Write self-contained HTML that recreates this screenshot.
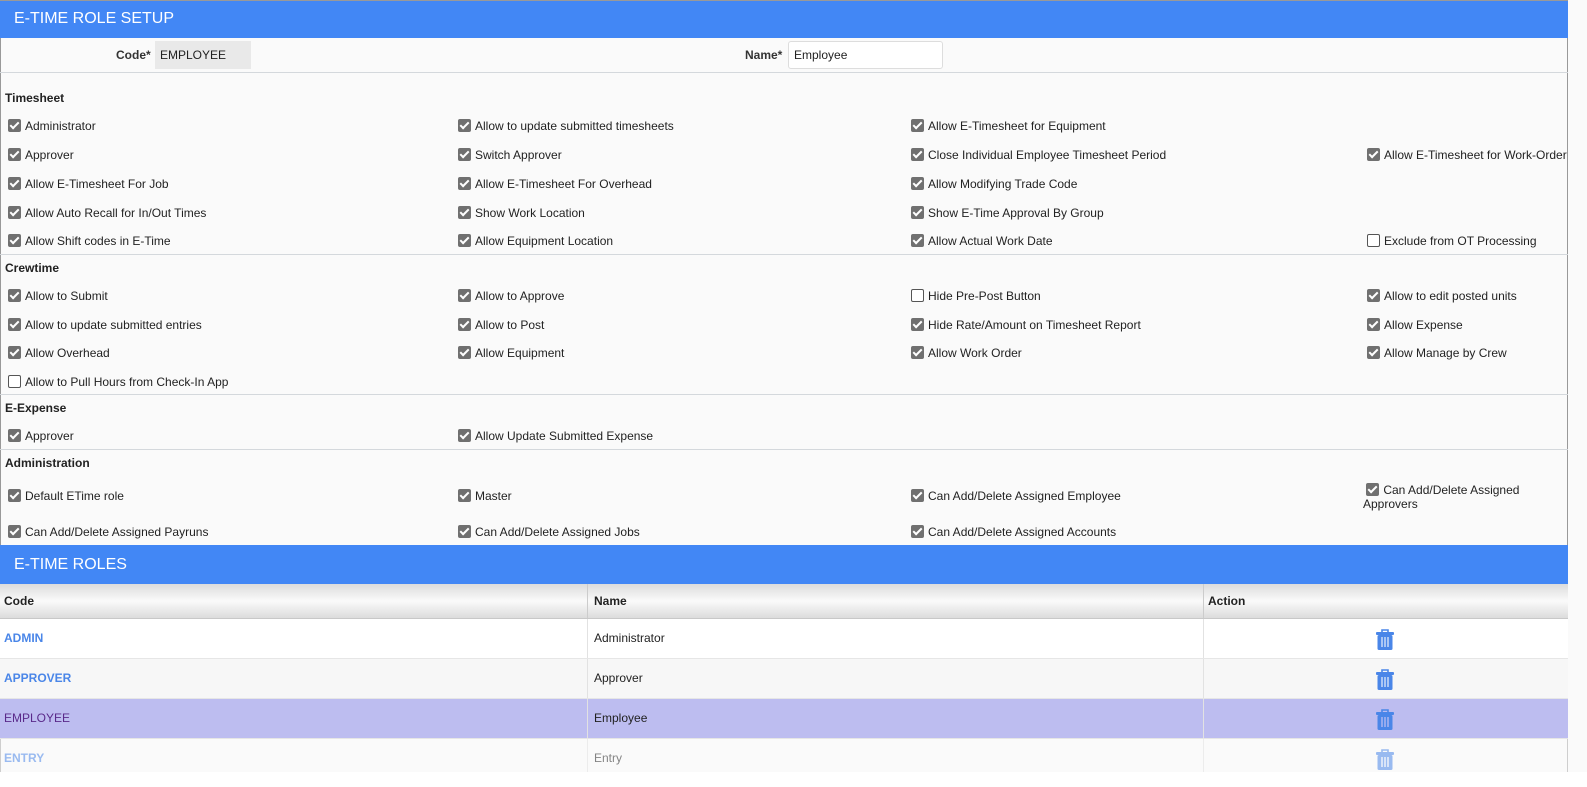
<!DOCTYPE html>
<html><head><style>
*{box-sizing:border-box;margin:0;padding:0}
body{width:1587px;height:787px;background:#fafafa;font-family:"Liberation Sans",Arial,sans-serif;font-size:12px;color:#222;position:relative;overflow:hidden}
.a{position:absolute;white-space:nowrap}
.bar{position:absolute;left:0;width:1568px;background:#4287f5;color:#fff;font-size:16px;padding-left:14px}
.cb{display:inline-block;width:13px;height:13px;border-radius:2px;background:#707070;vertical-align:-2px;margin-right:4px;position:relative}
.cb:after{content:"";position:absolute;left:4px;top:1px;width:3px;height:7px;border:solid #fff;border-width:0 2px 2px 0;transform:rotate(45deg)}
.un{background:#fff;border:1px solid #555}
.un:after{display:none}
.h{font-weight:bold}
.ln{position:absolute;left:0;width:1568px;height:1px;background:#d4d8dc}
.tbl{position:absolute;left:0;top:584px;width:1568px}
.tr{position:absolute;left:0;width:1568px;height:40px;border-bottom:1px solid #e6e6e6}
.tr div{position:absolute;top:0;height:100%;line-height:39px;padding-left:4px}
.c1{left:0;width:588px;border-right:1px solid #e2e2e2}
.c2{left:588px;width:616px;border-right:1px solid #e2e2e2;padding-left:6px!important}
.c3{left:1204px;width:364px}
.lk{color:#4a86e8;font-weight:bold}
.tr svg{position:absolute;left:172px;top:10px}
</style></head><body>
<div style="position:absolute;left:0;top:0;width:1568px;height:787px;border-left:1px solid #999;border-right:1px solid #999"></div>
<div class="bar" style="top:0;height:38px;line-height:36px;border-top:1px solid #999">E-TIME ROLE SETUP</div>
<div class="a h" style="left:116px;top:48px;font-weight:bold;color:#333">Code*</div>
<div class="a" style="left:155px;top:41px;width:96px;height:28px;background:#e9e9e9;line-height:28px;padding-left:5px">EMPLOYEE</div>
<div class="a" style="left:745px;top:48px;font-weight:bold;color:#333">Name*</div>
<div class="a" style="left:788px;top:41px;width:155px;height:28px;background:#fff;border:1px solid #ddd;border-radius:3px;line-height:26px;padding-left:5px">Employee</div>
<div class="ln" style="top:72px"></div>

<div class="a h" style="left:5px;top:91px">Timesheet</div>
<div class="a" style="left:8px;top:119px"><span class="cb"></span>Administrator</div>
<div class="a" style="left:458px;top:119px"><span class="cb"></span>Allow to update submitted timesheets</div>
<div class="a" style="left:911px;top:119px"><span class="cb"></span>Allow E-Timesheet for Equipment</div>
<div class="a" style="left:8px;top:148px"><span class="cb"></span>Approver</div>
<div class="a" style="left:458px;top:148px"><span class="cb"></span>Switch Approver</div>
<div class="a" style="left:911px;top:148px"><span class="cb"></span>Close Individual Employee Timesheet Period</div>
<div class="a" style="left:1367px;top:148px"><span class="cb"></span>Allow E-Timesheet for Work-Order</div>
<div class="a" style="left:8px;top:177px"><span class="cb"></span>Allow E-Timesheet For Job</div>
<div class="a" style="left:458px;top:177px"><span class="cb"></span>Allow E-Timesheet For Overhead</div>
<div class="a" style="left:911px;top:177px"><span class="cb"></span>Allow Modifying Trade Code</div>
<div class="a" style="left:8px;top:206px"><span class="cb"></span>Allow Auto Recall for In/Out Times</div>
<div class="a" style="left:458px;top:206px"><span class="cb"></span>Show Work Location</div>
<div class="a" style="left:911px;top:206px"><span class="cb"></span>Show E-Time Approval By Group</div>
<div class="a" style="left:8px;top:234px"><span class="cb"></span>Allow Shift codes in E-Time</div>
<div class="a" style="left:458px;top:234px"><span class="cb"></span>Allow Equipment Location</div>
<div class="a" style="left:911px;top:234px"><span class="cb"></span>Allow Actual Work Date</div>
<div class="a" style="left:1367px;top:234px"><span class="cb un"></span>Exclude from OT Processing</div>
<div class="ln" style="top:254px"></div>

<div class="a h" style="left:5px;top:261px">Crewtime</div>
<div class="a" style="left:8px;top:289px"><span class="cb"></span>Allow to Submit</div>
<div class="a" style="left:458px;top:289px"><span class="cb"></span>Allow to Approve</div>
<div class="a" style="left:911px;top:289px"><span class="cb un"></span>Hide Pre-Post Button</div>
<div class="a" style="left:1367px;top:289px"><span class="cb"></span>Allow to edit posted units</div>
<div class="a" style="left:8px;top:318px"><span class="cb"></span>Allow to update submitted entries</div>
<div class="a" style="left:458px;top:318px"><span class="cb"></span>Allow to Post</div>
<div class="a" style="left:911px;top:318px"><span class="cb"></span>Hide Rate/Amount on Timesheet Report</div>
<div class="a" style="left:1367px;top:318px"><span class="cb"></span>Allow Expense</div>
<div class="a" style="left:8px;top:346px"><span class="cb"></span>Allow Overhead</div>
<div class="a" style="left:458px;top:346px"><span class="cb"></span>Allow Equipment</div>
<div class="a" style="left:911px;top:346px"><span class="cb"></span>Allow Work Order</div>
<div class="a" style="left:1367px;top:346px"><span class="cb"></span>Allow Manage by Crew</div>
<div class="a" style="left:8px;top:375px"><span class="cb un"></span>Allow to Pull Hours from Check-In App</div>
<div class="ln" style="top:394px"></div>

<div class="a h" style="left:5px;top:401px">E-Expense</div>
<div class="a" style="left:8px;top:429px"><span class="cb"></span>Approver</div>
<div class="a" style="left:458px;top:429px"><span class="cb"></span>Allow Update Submitted Expense</div>
<div class="ln" style="top:449px"></div>

<div class="a h" style="left:5px;top:456px">Administration</div>
<div class="a" style="left:8px;top:489px"><span class="cb"></span>Default ETime role</div>
<div class="a" style="left:458px;top:489px"><span class="cb"></span>Master</div>
<div class="a" style="left:911px;top:489px"><span class="cb"></span>Can Add/Delete Assigned Employee</div>
<div class="a" style="left:1363px;top:483px;white-space:normal;width:200px;line-height:14px">&nbsp;<span class="cb"></span>Can Add/Delete Assigned Approvers</div>
<div class="a" style="left:8px;top:525px"><span class="cb"></span>Can Add/Delete Assigned Payruns</div>
<div class="a" style="left:458px;top:525px"><span class="cb"></span>Can Add/Delete Assigned Jobs</div>
<div class="a" style="left:911px;top:525px"><span class="cb"></span>Can Add/Delete Assigned Accounts</div>

<div class="bar" style="top:545px;height:39px;line-height:39px">E-TIME ROLES</div>
<div class="tr" style="top:584px;height:35px;background:linear-gradient(#dcdcdc,#fafafa 50%,#dcdcdc);border-bottom:1px solid #c8c8c8">
<div class="c1 h" style="line-height:35px;border-right:1px solid #ccc">Code</div><div class="c2 h" style="line-height:35px;border-right:1px solid #ccc">Name</div><div class="c3 h" style="line-height:35px">Action</div></div>
<div class="tr" style="top:619px;background:#fff"><div class="c1 lk">ADMIN</div><div class="c2">Administrator</div><div class="c3"><svg width="18" height="21" viewBox="0 0 18 21"><path d="M6 3V1h6v2" fill="none" stroke="#4a86e8" stroke-width="1.6"/><rect x="0" y="3" width="18" height="3" rx="1" fill="#4a86e8"/><rect x="1.5" y="6" width="15" height="15" rx="1.5" fill="#4a86e8"/><path d="M6 8v10M9 8v10M12 8v10" stroke="#dfe9fb" stroke-width="1.3"/></svg></div></div>
<div class="tr" style="top:659px;background:#f7f7f7"><div class="c1 lk">APPROVER</div><div class="c2">Approver</div><div class="c3"><svg width="18" height="21" viewBox="0 0 18 21"><path d="M6 3V1h6v2" fill="none" stroke="#4a86e8" stroke-width="1.6"/><rect x="0" y="3" width="18" height="3" rx="1" fill="#4a86e8"/><rect x="1.5" y="6" width="15" height="15" rx="1.5" fill="#4a86e8"/><path d="M6 8v10M9 8v10M12 8v10" stroke="#dfe9fb" stroke-width="1.3"/></svg></div></div>
<div class="tr" style="top:699px;background:#bdbdf0"><div class="c1" style="color:#5a2a8a">EMPLOYEE</div><div class="c2">Employee</div><div class="c3"><svg width="18" height="21" viewBox="0 0 18 21"><path d="M6 3V1h6v2" fill="none" stroke="#4a86e8" stroke-width="1.6"/><rect x="0" y="3" width="18" height="3" rx="1" fill="#4a86e8"/><rect x="1.5" y="6" width="15" height="15" rx="1.5" fill="#4a86e8"/><path d="M6 8v10M9 8v10M12 8v10" stroke="#bdbdf0" stroke-width="1.3"/></svg></div></div>
<div class="tr" style="top:739px;background:#fafafa;opacity:.55;border:none"><div class="c1 lk">ENTRY</div><div class="c2">Entry</div><div class="c3"><svg width="18" height="21" viewBox="0 0 18 21"><path d="M6 3V1h6v2" fill="none" stroke="#4a86e8" stroke-width="1.6"/><rect x="0" y="3" width="18" height="3" rx="1" fill="#4a86e8"/><rect x="1.5" y="6" width="15" height="15" rx="1.5" fill="#4a86e8"/><path d="M6 8v10M9 8v10M12 8v10" stroke="#fff" stroke-width="1.3"/></svg></div></div>
<div style="position:absolute;left:0;top:772px;width:1587px;height:15px;background:#fff"></div>
</body></html>
